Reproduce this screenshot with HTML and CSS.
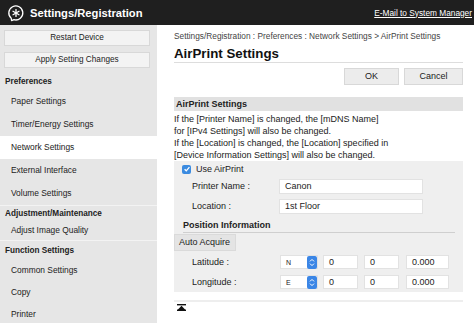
FILE: index.html
```html
<!DOCTYPE html>
<html lang="en">
<head>
    <meta charset="UTF-8">
    <title>AirPrint Settings</title>
    <link rel="stylesheet" href="styles.css">
</head>
<body>
    <div id="header">
        <div class="brand">
            <svg class="logo" width="18" height="18" viewBox="0 0 18 18">
                <path d="M4.2 14.2 A7 7 0 1 1 7 15.7 L4.6 16.6 Z" fill="none" stroke="#fff" stroke-width="1.3" stroke-linejoin="round"/>
                <g stroke="#fff" stroke-width="1.3" stroke-linecap="round">
                    <line x1="9" y1="5.6" x2="9" y2="12.4"/>
                    <line x1="6" y1="7.3" x2="12" y2="10.7"/>
                    <line x1="6" y1="10.7" x2="12" y2="7.3"/>
                </g>
            </svg>
            <span class="title">Settings/Registration</span>
        </div>
        <a class="mail" href="#">E-Mail to System Manager</a>
    </div>

    <div id="page">
        <div id="side">
            <div class="side-btn">Restart Device</div>
            <div class="side-btn">Apply Setting Changes</div>

            <div class="group first">Preferences</div>
            <div class="item">Paper Settings</div>
            <div class="item">Timer/Energy Settings</div>
            <div class="item active">Network Settings</div>
            <div class="item">External Interface</div>
            <div class="item">Volume Settings</div>

            <div class="group">Adjustment/Maintenance</div>
            <div class="item short">Adjust Image Quality</div>

            <div class="group tall">Function Settings</div>
            <div class="item small">Common Settings</div>
            <div class="item small">Copy</div>
            <div class="item small">Printer</div>
        </div>

        <div id="main">
            <div class="crumb">Settings/Registration : Preferences : Network Settings &gt; AirPrint Settings</div>
            <h1>AirPrint Settings</h1>
            <div class="actions">
                <div class="btn ok">OK</div>
                <div class="btn">Cancel</div>
            </div>

            <div class="sec-head">AirPrint Settings</div>
            <p class="note">If the [Printer Name] is changed, the [mDNS Name]<br>for [IPv4 Settings] will also be changed.<br>If the [Location] is changed, the [Location] specified in<br>[Device Information Settings] will also be changed.</p>

            <div class="box">
                <div class="check-row">
                    <span class="check">
                        <svg width="8" height="8" viewBox="0 0 8 8"><path d="M1.6 4.2 L3.3 5.8 L6.4 2.2" fill="none" stroke="#fff" stroke-width="1.3"/></svg>
                    </span>
                    Use AirPrint
                </div>
                <div class="field">
                    <span class="label">Printer Name :</span>
                    <span class="input wide">Canon</span>
                </div>
                <div class="field">
                    <span class="label">Location :</span>
                    <span class="input wide">1st Floor</span>
                </div>

                <div class="sub-head">Position Information</div>
                <div class="auto">Auto Acquire</div>

                <div class="field pos">
                    <span class="label">Latitude :</span>
                    <span class="select">N<span class="stepper"><svg width="6" height="9" viewBox="0 0 6 9"><path d="M1 3.4 L3 1.4 L5 3.4 M1 5.6 L3 7.6 L5 5.6" fill="none" stroke="#fff" stroke-width="1"/></svg></span></span>
                    <span class="input num">0</span>
                    <span class="input num">0</span>
                    <span class="input num sec">0.000</span>
                </div>
                <div class="field pos">
                    <span class="label">Longitude :</span>
                    <span class="select">E<span class="stepper"><svg width="6" height="9" viewBox="0 0 6 9"><path d="M1 3.4 L3 1.4 L5 3.4 M1 5.6 L3 7.6 L5 5.6" fill="none" stroke="#fff" stroke-width="1"/></svg></span></span>
                    <span class="input num">0</span>
                    <span class="input num">0</span>
                    <span class="input num sec">0.000</span>
                </div>
            </div>

            <div class="foot">
                <svg width="9" height="7" viewBox="0 0 9 7"><rect x="0" y="0" width="9" height="1.4" fill="#111"/><path d="M4.5 1.8 L8.5 6 L0.5 6 Z" fill="#111"/><rect x="0" y="5.6" width="9" height="1.4" fill="#111"/></svg>
            </div>
        </div>
    </div>
</body>
</html>
```

FILE: styles.css
```css
html, body{
    margin: 0;
    height: 100%;
    overflow: hidden;
}
body{
    font-family: "Liberation Sans", Arial, sans-serif;
    font-size: 9px;
    color: #222;
    background: #fff;
}

#header{
    height: 25px;
    background: #1f1f1f;
    display: flex;
    align-items: center;
    justify-content: space-between;
    padding: 0 2px 0 7px;
}
.brand{
    display: flex;
    align-items: center;
    gap: 5px;
}
.logo{
    display: block;
}
.title{
    color: #fff;
    font-weight: bold;
    font-size: 11.2px;
}
.mail{
    color: #fff;
    font-size: 8.3px;
    text-decoration: underline;
}

#page{
    display: flex;
    height: 298px;
}

#side{
    width: 157px;
    flex-shrink: 0;
    background: #e6e6e6;
    padding-top: 5px;
    box-sizing: border-box;
}
.side-btn{
    margin: 0 7px 6px 4px;
    height: 14px;
    line-height: 14px;
    text-align: center;
    background: #f3f3f3;
    border: 1px solid #d8d8d8;
    font-size: 8.2px;
}
.group{
    font-weight: bold;
    font-size: 8.2px;
    height: 15px;
    line-height: 16px;
    padding-left: 5px;
    border-top: 1px solid #f3f3f3;
}
.group.first{
    border-top: none;
    margin-top: 4px;
    height: 16px;
    line-height: 16px;
}
.group.tall{
    height: 18px;
    line-height: 19px;
}
.item{
    height: 23px;
    line-height: 23px;
    padding-left: 11px;
    font-size: 8.4px;
}
.item.short{
    height: 19px;
    line-height: 19px;
}
.item.small{
    height: 22px;
    line-height: 22px;
}
.item.active{
    background: #fff;
}

#main{
    flex: 1;
    padding: 4px 11px 0 17px;
}
.crumb{
    color: #444;
    font-size: 8.3px;
    height: 14px;
    line-height: 15px;
    white-space: nowrap;
}
h1{
    margin: 1px 0 0;
    padding-top: 2px;
    font-size: 13.3px;
    font-weight: bold;
    line-height: 16px;
    border-bottom: 1px solid #ddd;
    color: #111;
}
.actions{
    display: flex;
    justify-content: flex-end;
    gap: 5px;
    margin-top: 5px;
}
.btn{
    width: 59px;
    height: 17px;
    line-height: 15px;
    text-align: center;
    background: #ececec;
    border: 1px solid #d8d8d8;
    box-sizing: border-box;
}
.btn.ok{
    width: 55px;
}

.sec-head{
    margin-top: 12px;
    height: 14px;
    line-height: 14px;
    background: #e1e1e1;
    font-weight: bold;
    padding-left: 2px;
}
.note{
    margin: 2px 0 0;
    line-height: 12px;
}

.box{
    background: #efefef;
    padding: 1px 0 0;
}
.check-row{
    display: flex;
    align-items: center;
    gap: 5px;
    padding-left: 8px;
    height: 14px;
}
.check{
    width: 9px;
    height: 9px;
    border-radius: 2px;
    background: #3b8be0;
    display: flex;
    align-items: center;
    justify-content: center;
}
.field{
    display: flex;
    align-items: center;
    height: 20px;
    padding-left: 18px;
}
.label{
    width: 87px;
}
.input{
    background: #fff;
    border: 1px solid #e2e2e2;
    box-sizing: border-box;
    height: 15px;
    line-height: 13px;
    padding-left: 5px;
}
.input.wide{
    width: 144px;
}
.sub-head{
    font-weight: bold;
    margin: 3px 8px 0 9px;
    line-height: 13px;
    border-bottom: 1px solid #cfcfcf;
}
.auto{
    width: fit-content;
    margin-top: 1px;
    padding: 0 5px 0 4px;
    height: 15px;
    line-height: 15px;
    background: #e4e4e4;
    border: 1px solid #dadada;
}
.pos{
    margin-top: 1px;
}
.pos + .pos{
    margin-top: 0;
}
.pos .label{
    width: 88px;
}
.select{
    width: 38px;
    height: 14px;
    background: #fff;
    border: 1px solid #e2e2e2;
    box-sizing: border-box;
    display: flex;
    align-items: center;
    justify-content: space-between;
    padding-left: 5px;
    font-size: 7px;
    margin-right: 5px;
}
.stepper{
    width: 10px;
    height: 13px;
    background: #3b86e6;
    border-radius: 2px;
    display: flex;
    align-items: center;
    justify-content: center;
}
.input.num{
    width: 35px;
    margin-right: 6px;
    height: 14px;
}
.input.num + .input.num{
    margin-right: 7px;
}
.input.sec{
    width: 43px;
    margin-right: 0;
}

.foot{
    margin-top: 8px;
    border-top: 2px solid #eee;
    padding: 2px 0 0 3px;
}
.foot svg{
    display: block;
}
```
